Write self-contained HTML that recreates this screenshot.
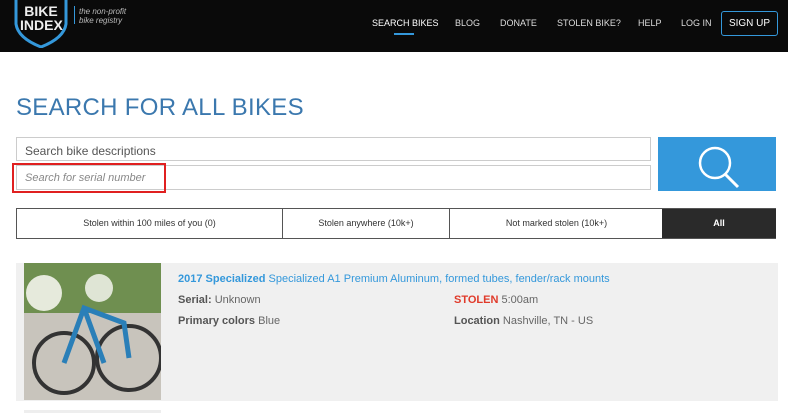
<!DOCTYPE html>
<html><head><style>
*{margin:0;padding:0;box-sizing:border-box}
body{width:788px;height:413px;overflow:hidden;background:#fff;font-family:"Liberation Sans",sans-serif;position:relative}
.nav{position:absolute;left:0;top:0;width:788px;height:52px;background:#0a0a0a}
.nav a{position:absolute;top:18px;color:#ddd;font-size:9px;text-decoration:none}
.abs{position:absolute}
</style></head><body>
<div class="nav">
<svg class="abs" style="left:14px;top:0" width="54" height="48" viewBox="0 0 54 48"><path d="M2 0 L2 24 Q4 38 27 47 Q50 38 52 24 L52 0" fill="none" stroke="#3498db" stroke-width="3"/></svg>
<div class="abs" style="left:20px;top:4px;width:42px;text-align:center;color:#eee;font-weight:bold;font-size:14px;line-height:14px">BIKE<br>INDEX</div>
<div class="abs" style="left:74px;top:6px;width:1px;height:18px;background:#3498db"></div>
<div class="abs" style="left:79px;top:7px;color:#bbb;font-style:italic;font-size:8px;line-height:9px">the non-profit<br>bike registry</div>
<a style="left:372px;color:#fff">SEARCH BIKES</a>
<div class="abs" style="left:394px;top:33px;width:20px;height:2px;background:#3498db"></div>
<a style="left:455px">BLOG</a>
<a style="left:500px">DONATE</a>
<a style="left:557px">STOLEN BIKE?</a>
<a style="left:638px">HELP</a>
<a style="left:681px">LOG IN</a>
<div class="abs" style="left:721px;top:11px;width:57px;height:25px;border:1px solid #3498db;border-radius:3px;color:#fff;font-size:10px;text-align:center;line-height:23px">SIGN UP</div>
</div>
<div class="abs" style="left:16px;top:94px;font-size:24px;color:#3b78ae;letter-spacing:0.3px">SEARCH FOR ALL BIKES</div>
<div class="abs" style="left:16px;top:137px;width:635px;height:24px;border:1px solid #ccc;font-size:12px;color:#555;padding:6px 8px">Search bike descriptions</div>
<div class="abs" style="left:16px;top:165px;width:635px;height:25px;border:1px solid #ccc;font-size:11px;color:#888;font-style:italic;padding:6px 8px">Search for serial number</div>
<div class="abs" style="left:12px;top:163px;width:154px;height:30px;border:2px solid #e02020"></div>
<div class="abs" style="left:658px;top:137px;width:118px;height:54px;background:#3498db"></div>
<svg class="abs" style="left:690px;top:142px" width="52" height="50"><circle cx="25" cy="21" r="15" fill="none" stroke="#fff" stroke-width="2.5"/><path d="M35 32 L48 45" stroke="#fff" stroke-width="3"/></svg>
<div class="abs" style="left:16px;top:208px;width:760px;height:31px;border:1px solid #555;font-size:9px;color:#333">
<div class="abs" style="left:0;top:0;width:266px;height:29px;border-right:1px solid #555;text-align:center;line-height:29px">Stolen within 100 miles of you (0)</div>
<div class="abs" style="left:266px;top:0;width:167px;height:29px;border-right:1px solid #555;text-align:center;line-height:29px">Stolen anywhere (10k+)</div>
<div class="abs" style="left:433px;top:0;width:213px;height:29px;text-align:center;line-height:29px">Not marked stolen (10k+)</div>
<div class="abs" style="left:645px;top:0;width:114px;height:29px;background:#2a2a2a;color:#fff;font-weight:bold;text-align:center;line-height:29px">All</div>
</div>
<div class="abs" style="left:16px;top:263px;width:762px;height:138px;background:#f0f0f0"></div>
<svg class="abs" style="left:24px;top:263px" width="137" height="137"><rect width="137" height="137" fill="#c8c4bc"/><rect width="137" height="50" fill="#6f8f50"/><circle cx="20" cy="30" r="18" fill="#e6eadc"/><circle cx="75" cy="25" r="14" fill="#dfe5d5"/><circle cx="40" cy="100" r="30" fill="none" stroke="#333" stroke-width="4"/><circle cx="105" cy="95" r="32" fill="none" stroke="#333" stroke-width="4"/><path d="M40 100 L60 45 L100 60 L105 95 M60 45 L80 100" stroke="#2a7fb8" stroke-width="5" fill="none"/></svg>
<div class="abs" style="left:178px;top:273px;font-size:11px;color:#3498db"><b>2017 Specialized</b> Specialized A1 Premium Aluminum, formed tubes, fender/rack mounts</div>
<div class="abs" style="left:178px;top:294px;font-size:11px;color:#666"><b style="color:#555">Serial:</b> Unknown</div>
<div class="abs" style="left:178px;top:315px;font-size:11px;color:#666"><b style="color:#555">Primary colors</b> Blue</div>
<div class="abs" style="left:454px;top:294px;font-size:11px;color:#666"><b style="color:#e03a2a">STOLEN</b> 5:00am</div>
<div class="abs" style="left:454px;top:315px;font-size:11px;color:#666"><b style="color:#555">Location</b> Nashville, TN - US</div>
<div class="abs" style="left:24px;top:410px;width:137px;height:3px;background:#eee"></div>
</body></html>
